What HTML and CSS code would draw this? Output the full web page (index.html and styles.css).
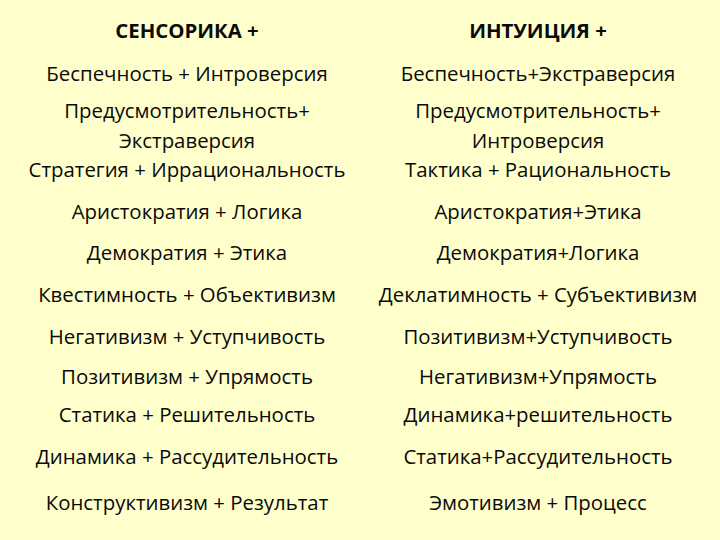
FILE: index.html
```html
<!DOCTYPE html>
<html lang="ru">
<head>
<meta charset="utf-8">
<title>Сенсорика и интуиция</title>
<link rel="stylesheet" href="styles.css">
</head>
<body>
<div class="table">
  <div class="row h0"><div class="cell head">СЕНСОРИКА +</div><div class="cell head">ИНТУИЦИЯ +</div></div>
  <div class="row h1"><div class="cell">Беспечность + Интроверсия</div><div class="cell">Беспечность+Экстраверсия</div></div>
  <div class="row h2 multi"><div class="cell">Предусмотрительность+<br>Экстраверсия<br>Стратегия + Иррациональность</div><div class="cell">Предусмотрительность+<br>Интроверсия<br>Тактика + Рациональность</div></div>
  <div class="row h3"><div class="cell">Аристократия + Логика</div><div class="cell">Аристократия+Этика</div></div>
  <div class="row h4"><div class="cell">Демократия + Этика</div><div class="cell">Демократия+Логика</div></div>
  <div class="row h5"><div class="cell">Квестимность + Объективизм</div><div class="cell">Деклатимность + Субъективизм</div></div>
  <div class="row h6"><div class="cell">Негативизм + Уступчивость</div><div class="cell">Позитивизм+Уступчивость</div></div>
  <div class="row h7"><div class="cell">Позитивизм + Упрямость</div><div class="cell">Негативизм+Упрямость</div></div>
  <div class="row h8"><div class="cell">Статика + Решительность</div><div class="cell">Динамика+решительность</div></div>
  <div class="row h9"><div class="cell">Динамика + Рассудительность</div><div class="cell">Статика+Рассудительность</div></div>
  <div class="row h10"><div class="cell">Конструктивизм + Результат</div><div class="cell">Эмотивизм + Процесс</div></div>
</div>
</body>
</html>
```
FILE: styles.css
```css
html, body {
  margin: 0;
  padding: 0;
  background: #ffffcc;
}
body {
  width: 720px;
  height: 540px;
  overflow: hidden;
  font-family: "Open Sans", "Noto Sans", sans-serif;
  font-size: 20.4px;
  color: #0a0a0a;
}
.table {
  padding-top: 4px;
  display: flex;
  flex-direction: column;
}
.row {
  display: grid;
  grid-template-columns: 374px 328px;
  align-items: center;
}
.cell {
  text-align: center;
  line-height: 29.5px;
  white-space: nowrap;
}
.head {
  font-weight: bold;
}
.h0 { height: 53px; }
.h1 { height: 33px; }
.h2 { height: 101px; }
.h3 { height: 41px; }
.h4 { height: 41px; }
.h5 { height: 43px; }
.h6 { height: 41px; }
.h7 { height: 39px; }
.h8 { height: 37px; }
.h9 { height: 47px; }
.h10 { height: 45px; }
```
